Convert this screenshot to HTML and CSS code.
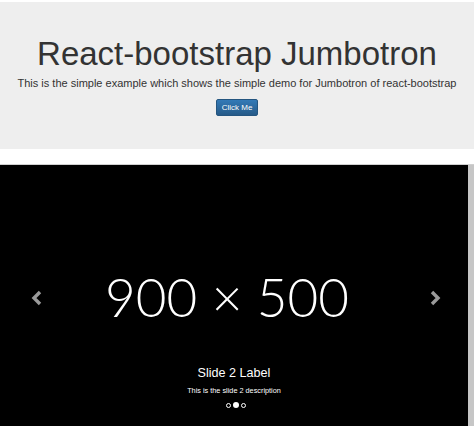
FILE: index.html
```html
<!DOCTYPE html>
<html>
<head>
<meta charset="utf-8">
<link rel="stylesheet" href="styles.css">
</head>
<body>
<div class="jumbotron">
  <h1 class="title">React-bootstrap Jumbotron</h1>
  <p class="lead">This is the simple example which shows the simple demo for Jumbotron of react-bootstrap</p>
  <button class="btn">Click Me</button>
</div>
<div class="carousel-wrap">
  <div class="carousel">
    <div class="slide-img">900 × 500</div>
    <a class="control left"><svg width="12" height="16" viewBox="0 0 12 16"><polyline points="9,2 3,8 9,14" fill="none" stroke="#9a9a9a" stroke-width="3.4" stroke-linejoin="miter"/></svg></a>
    <a class="control right"><svg width="12" height="16" viewBox="0 0 12 16"><polyline points="3,2 9,8 3,14" fill="none" stroke="#9a9a9a" stroke-width="3.4" stroke-linejoin="miter"/></svg></a>
    <div class="caption">
      <h3 class="cap-title">Slide 2 Label</h3>
      <p class="cap-desc">This is the slide 2 description</p>
    </div>
    <ol class="indicators">
      <li class="dot"></li>
      <li class="dot active"></li>
      <li class="dot"></li>
    </ol>
  </div>
  <div class="strip"></div>
</div>
</body>
</html>
```
FILE: styles.css
```css
html, body {
  margin: 0;
  padding: 0;
  background: #fff;
  font-family: "Liberation Sans", Arial, sans-serif;
  color: #333;
  overflow: hidden;
}
.jumbotron {
  margin-top: 2px;
  height: 147px;
  background: #eeeeee;
  display: flex;
  flex-direction: column;
  align-items: center;
  box-sizing: border-box;
  padding-top: 35px;
}
.title {
  margin: 0;
  font-size: 33px;
  line-height: 33px;
  font-weight: 400;
  color: #333;
}
.lead {
  margin: 6px 0 0;
  font-size: 11px;
  line-height: 14px;
  color: #333;
}
.btn {
  margin-top: 9px;
  width: 42px;
  height: 17px;
  padding: 0;
  font-family: "Liberation Sans", Arial, sans-serif;
  font-size: 8px;
  color: #fff;
  border: 1px solid #245580;
  border-radius: 2px;
  background: linear-gradient(to bottom, #337ab7 0%, #265a88 100%);
}
.carousel-wrap {
  margin-top: 15px;
  border-top: 1px solid #d0d0d0;
  display: flex;
  height: 262px;
}
.carousel {
  position: relative;
  flex: 1;
  background: #000;
  overflow: hidden;
}
.strip {
  width: 6px;
  background: #c6c6c6;
}
.slide-img {
  height: 260px;
  display: flex;
  align-items: center;
  justify-content: center;
  padding-right: 14px;
  box-sizing: border-box;
  color: #fff;
  font-family: "Lato", sans-serif;
  font-weight: 300;
  font-size: 53px;
  padding-top: 2px;
}
.control {
  position: absolute;
  top: 0;
  height: 260px;
  width: 70px;
  display: flex;
  align-items: center;
  justify-content: center;
}
.control.left { left: 2px; padding-top: 6px; box-sizing: border-box; }
.control.right { right: -2px; padding-top: 6px; box-sizing: border-box; }
.caption {
  position: absolute;
  left: 70px;
  right: 70px;
  top: 200px;
  text-align: center;
  color: #fff;
}
.cap-title {
  margin: 0;
  font-size: 12.6px;
  line-height: 16px;
  font-weight: 400;
}
.cap-desc {
  margin: 5px 0 0;
  font-size: 7.3px;
  line-height: 10px;
}
.indicators {
  position: absolute;
  top: 237px;
  left: 0;
  right: 0;
  margin: 0;
  padding: 0 0 0 4px;
  list-style: none;
  display: flex;
  justify-content: center;
  align-items: center;
  gap: 2px;
}
.dot {
  width: 5px;
  height: 5px;
  box-sizing: border-box;
  border: 1px solid #fff;
  border-radius: 50%;
}
.dot.active {
  width: 6px;
  height: 6px;
  border: 0;
  background: #fff;
}
```
